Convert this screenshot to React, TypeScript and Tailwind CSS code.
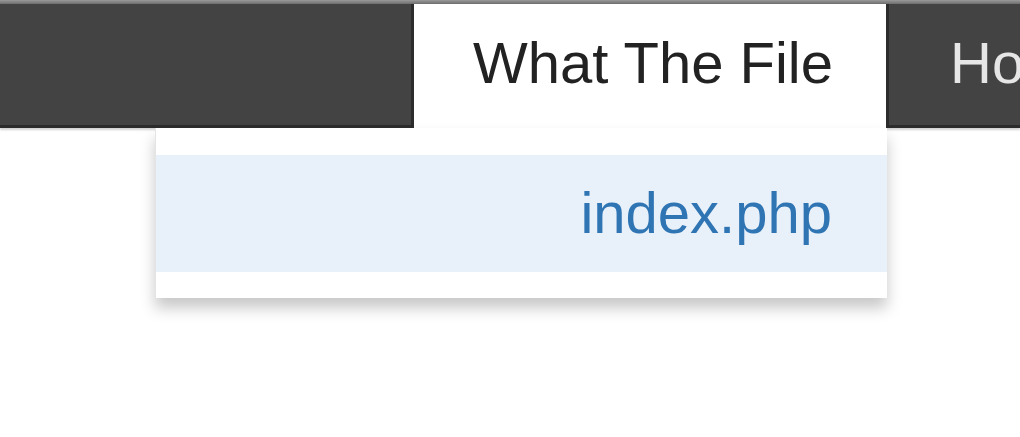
import React from 'react';

const FONT = { fontFamily: '"Liberation Sans", Arial, Helvetica, sans-serif' };

export default function App() {
  return (
    <div className="relative w-[1020px] h-[437px] bg-white overflow-hidden" style={FONT}>
      {/* top edge */}
      <div className="h-[4px] bg-gradient-to-b from-[#9a9a9a] to-[#6e6e6e]" />

      {/* nav bar */}
      <div className="flex h-[124px] shadow-[0_2px_2px_rgba(0,0,0,0.18)]">
        <div className="w-[414px] bg-[#434343] border-b-[3px] border-r-[3px] border-[#2c2c2c]" />
        <div className="w-[472px] bg-white flex justify-end pt-[30px] pr-[53px]">
          <span className="text-[58px] leading-none text-[#222]">What The File</span>
        </div>
        <div className="flex-1 bg-[#434343] border-b-[3px] border-l-[3px] border-[#2c2c2c] pt-[30px] pl-[61px] overflow-hidden whitespace-nowrap">
          <span className="text-[58px] leading-none text-[#e6e6e6]">Home</span>
        </div>
      </div>

      {/* dropdown menu */}
      <div className="absolute left-[155px] top-[128px] w-[732px] bg-white pt-[27px] pb-[26px] border-l border-[#e4e4e4] shadow-[0_10px_14px_rgba(0,0,0,0.22)]">
        <div className="bg-[#e8f0fa] flex justify-end pt-[29px] pb-[30px] pr-[55px]">
          <span className="text-[58px] leading-none text-[#2f74b3]">index.php</span>
        </div>
      </div>
    </div>
  );
}
